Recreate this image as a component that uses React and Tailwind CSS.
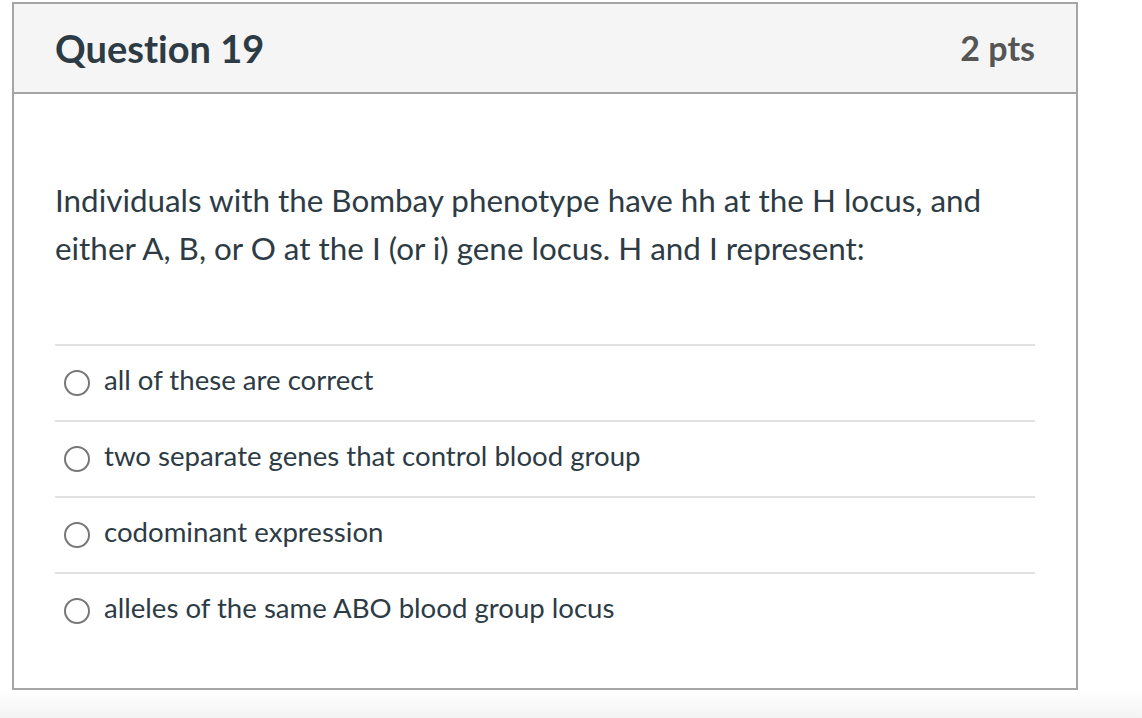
export default function App() {
  const answers = [
    "all of these are correct",
    "two separate genes that control blood group",
    "codominant expression",
    "alleles of the same ABO blood group locus",
  ];
  return (
    <div className="w-[1142px] h-[718px] bg-white flex flex-col [font-variant-ligatures:none]" style={{ fontFamily: "Lato, 'Noto Sans', sans-serif" }}>
      <div className="pt-[2px] pl-[12px]">
        <div className="w-[1066px] h-[688px] border-2 border-[#a5a5a5] flex flex-col">
          <div className="h-[90px] bg-[#f5f5f5] border-b-2 border-[#a5a5a5] px-[41px] flex items-center justify-between">
            <div className="text-[38px] font-bold text-[#2d3b45] leading-none">Question 19</div>
            <div className="text-[34px] font-bold text-[#555555] leading-none">2 pts</div>
          </div>
          <div className="px-[41px] pt-[82px]">
            <div className="text-[31.4px] leading-[48px] text-[#2d3b45]">
              Individuals with the Bombay phenotype have hh at the H locus, and either A, B, or O at the I (or i) gene locus. H and I represent:
            </div>
            <div className="mt-[72px]">
              {answers.map((a) => (
                <div key={a} className="h-[76px] border-t-2 border-[#e0e0e0] flex items-center">
                  <div className="ml-[9px] w-[26px] h-[26px] rounded-full border-2 border-[#777777] bg-white shrink-0"></div>
                  <div className="ml-[14px] text-[27.6px] leading-none pb-[6px] text-[#2d3b45]">{a}</div>
                </div>
              ))}
            </div>
          </div>
        </div>
      </div>
      <div className="flex-1 bg-gradient-to-b from-white to-[#f3f3f3]"></div>
    </div>
  );
}
